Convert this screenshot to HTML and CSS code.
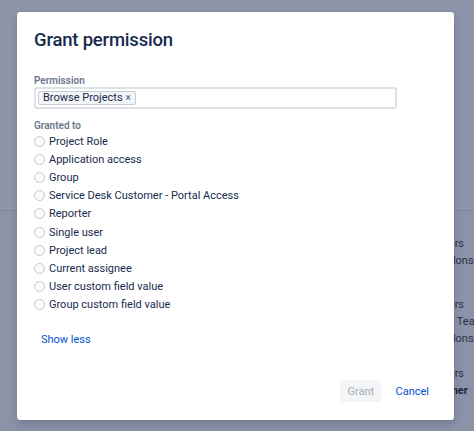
FILE: index.html
```html
<!DOCTYPE html>
<html>
<head>
<meta charset="utf-8">
<link rel="stylesheet" href="styles.css">
</head>
<body>
<div class="page">
  <div class="page-head"></div>
  <div class="page-body">
    <div class="side-col">
      <div class="bg-line g1">Users</div>
      <div class="bg-line">Addons-</div>
      <div class="bg-line g2">Users</div>
      <div class="bg-line">Dev Tea</div>
      <div class="bg-line">Addons-</div>
      <div class="bg-line g3">Users</div>
      <div class="bg-line strong">Owner</div>
    </div>
  </div>
</div>

<div class="modal" role="dialog">
  <h1 class="modal-title">Grant permission</h1>
  <div class="field">
    <div class="field-label">Permission</div>
    <div class="multi-select">
      <span class="tag">Browse Projects <span class="tag-x">×</span></span>
    </div>
  </div>
  <div class="field granted">
    <div class="field-label">Granted to</div>
    <ul class="radio-list">
      <li class="radio-row"><span class="radio"></span>Project Role</li>
      <li class="radio-row"><span class="radio"></span>Application access</li>
      <li class="radio-row"><span class="radio"></span>Group</li>
      <li class="radio-row"><span class="radio"></span>Service Desk Customer - Portal Access</li>
      <li class="radio-row"><span class="radio"></span>Reporter</li>
      <li class="radio-row"><span class="radio"></span>Single user</li>
      <li class="radio-row"><span class="radio"></span>Project lead</li>
      <li class="radio-row"><span class="radio"></span>Current assignee</li>
      <li class="radio-row"><span class="radio"></span>User custom field value</li>
      <li class="radio-row"><span class="radio"></span>Group custom field value</li>
    </ul>
  </div>
  <button class="link-btn show-less">Show less</button>
  <div class="modal-footer">
    <button class="btn btn-disabled">Grant</button>
    <button class="btn btn-link">Cancel</button>
  </div>
</div>
</body>
</html>
```
FILE: styles.css
```css
* { box-sizing: border-box; }
html, body {
  margin: 0;
  padding: 0;
  width: 474px;
  height: 431px;
  overflow: hidden;
}
body {
  background: #8b93a7;
  font-family: Roboto, "Liberation Sans", Arial, sans-serif;
  color: #172b4d;
  position: relative;
}
.page {
  width: 474px;
  height: 431px;
}
.page-head {
  height: 211px;
  border-bottom: 1px solid #7f889b;
  background: #8d95a9;
}
.page-body {
  display: flex;
}
.side-col {
  margin-left: 436px;
  padding-top: 24px;
  font-size: 11px;
  color: #2a3245;
  white-space: nowrap;
}
.bg-line {
  height: 17px;
  line-height: 17px;
}
.bg-line.g2 { margin-top: 27px; }
.bg-line.g3 { margin-top: 18px; }
.bg-line.strong { font-weight: 700; color: #1d2536; }

.modal {
  position: absolute;
  left: 17px;
  top: 12px;
  width: 437px;
  height: 408px;
  background: #fff;
  border-radius: 3px;
  box-shadow: 0 0 1px rgba(9,30,66,0.3), 0 4px 8px rgba(9,30,66,0.2);
  padding: 16px 17px 18px 17px;
  display: flex;
  flex-direction: column;
}
.modal-title {
  margin: 0;
  font-size: 18.5px;
  line-height: 24px;
  font-weight: 500;
  color: #172b4d;
  letter-spacing: -0.2px;
}
.field {
  margin-top: 22px;
}
.field.granted {
  margin-top: 10px;
}
.field-label {
  font-size: 10px;
  line-height: 13px;
  font-weight: 600;
  color: #6b778c;
}
.multi-select {
  width: 363px;
  height: 22px;
  border: 2px solid #dfe1e6;
  border-radius: 3px;
  padding: 1px 2px;
  display: flex;
  align-items: center;
}
.tag {
  display: inline-flex;
  align-items: center;
  height: 14px;
  padding: 0 4px;
  background: #f4f5f7;
  border: 1px solid #c9ced6;
  border-radius: 2px;
  font-size: 11px;
  color: #172b4d;
  line-height: 12px;
}
.tag-x {
  margin-left: 3px;
  font-size: 10px;
  color: #42526e;
}
.radio-list {
  list-style: none;
  margin: 0;
  padding: 0;
}
.radio-row {
  height: 18.2px;
  display: flex;
  align-items: center;
  font-size: 11px;
  color: #172b4d;
}
.radio {
  width: 11px;
  height: 11px;
  border-radius: 50%;
  border: 1px solid #c1c7d0;
  background: #fafbfc;
  margin-right: 4px;
  flex: none;
}
.link-btn {
  align-self: flex-start;
  margin-top: 16px;
  height: 20px;
  padding: 0 7px;
  border: none;
  background: none;
  font-family: inherit;
  font-size: 11px;
  color: #0052cc;
  cursor: pointer;
}
.modal-footer {
  margin-top: auto;
  display: flex;
  justify-content: flex-end;
  gap: 7px;
}
.btn {
  height: 22px;
  border: none;
  border-radius: 3px;
  font-family: inherit;
  font-size: 11px;
  padding: 0 8px;
}
.btn-disabled {
  background: #f4f5f7;
  color: #a5adba;
  width: 41px;
}
.btn-link {
  background: none;
  color: #0052cc;
}
```
